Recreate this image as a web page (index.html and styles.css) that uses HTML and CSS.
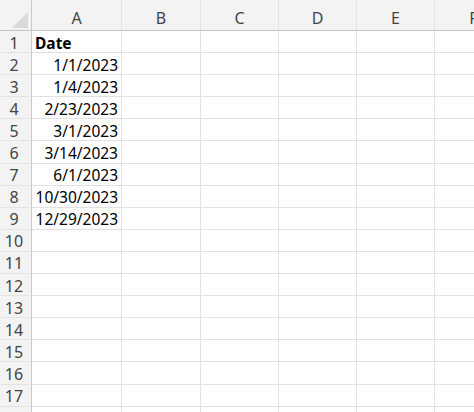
FILE: index.html
```html
<!DOCTYPE html>
<html>
<head>
<meta charset="utf-8">
<link rel="stylesheet" href="styles.css">
</head>
<body>
<div class="sheet">
  <div class="corner"><span class="tri"></span></div>
  <div class="colhead">A</div><div class="colhead">B</div><div class="colhead">C</div><div class="colhead">D</div><div class="colhead">E</div><div class="colhead">F</div>

  <div class="rowhead">1</div><div class="cell bold">Date</div><div class="cell"></div><div class="cell"></div><div class="cell"></div><div class="cell"></div><div class="cell"></div>
  <div class="rowhead">2</div><div class="cell num">1/1/2023</div><div class="cell"></div><div class="cell"></div><div class="cell"></div><div class="cell"></div><div class="cell"></div>
  <div class="rowhead">3</div><div class="cell num">1/4/2023</div><div class="cell"></div><div class="cell"></div><div class="cell"></div><div class="cell"></div><div class="cell"></div>
  <div class="rowhead">4</div><div class="cell num">2/23/2023</div><div class="cell"></div><div class="cell"></div><div class="cell"></div><div class="cell"></div><div class="cell"></div>
  <div class="rowhead">5</div><div class="cell num">3/1/2023</div><div class="cell"></div><div class="cell"></div><div class="cell"></div><div class="cell"></div><div class="cell"></div>
  <div class="rowhead">6</div><div class="cell num">3/14/2023</div><div class="cell"></div><div class="cell"></div><div class="cell"></div><div class="cell"></div><div class="cell"></div>
  <div class="rowhead">7</div><div class="cell num">6/1/2023</div><div class="cell"></div><div class="cell"></div><div class="cell"></div><div class="cell"></div><div class="cell"></div>
  <div class="rowhead">8</div><div class="cell num">10/30/2023</div><div class="cell"></div><div class="cell"></div><div class="cell"></div><div class="cell"></div><div class="cell"></div>
  <div class="rowhead">9</div><div class="cell num">12/29/2023</div><div class="cell"></div><div class="cell"></div><div class="cell"></div><div class="cell"></div><div class="cell"></div>
  <div class="rowhead">10</div><div class="cell"></div><div class="cell"></div><div class="cell"></div><div class="cell"></div><div class="cell"></div><div class="cell"></div>
  <div class="rowhead">11</div><div class="cell"></div><div class="cell"></div><div class="cell"></div><div class="cell"></div><div class="cell"></div><div class="cell"></div>
  <div class="rowhead">12</div><div class="cell"></div><div class="cell"></div><div class="cell"></div><div class="cell"></div><div class="cell"></div><div class="cell"></div>
  <div class="rowhead">13</div><div class="cell"></div><div class="cell"></div><div class="cell"></div><div class="cell"></div><div class="cell"></div><div class="cell"></div>
  <div class="rowhead">14</div><div class="cell"></div><div class="cell"></div><div class="cell"></div><div class="cell"></div><div class="cell"></div><div class="cell"></div>
  <div class="rowhead">15</div><div class="cell"></div><div class="cell"></div><div class="cell"></div><div class="cell"></div><div class="cell"></div><div class="cell"></div>
  <div class="rowhead">16</div><div class="cell"></div><div class="cell"></div><div class="cell"></div><div class="cell"></div><div class="cell"></div><div class="cell"></div>
  <div class="rowhead">17</div><div class="cell"></div><div class="cell"></div><div class="cell"></div><div class="cell"></div><div class="cell"></div><div class="cell"></div>
  <div class="rowhead"></div><div class="cell"></div><div class="cell"></div><div class="cell"></div><div class="cell"></div><div class="cell"></div><div class="cell"></div>
</div>
</body>
</html>
```
FILE: styles.css
```css
html, body {
  margin: 0;
  padding: 0;
  background: #ffffff;
  overflow: hidden;
}
.sheet {
  display: grid;
  grid-template-columns: 32px 90px 79px 78px 78px 78px 78px;
  grid-template-rows: 31px repeat(18, 22.1px);
  width: 474px;
  height: 412px;
  overflow: hidden;
  font-family: "Noto Sans", "Open Sans", sans-serif;
}
.corner {
  background: #f3f3f3;
  border-right: 1px solid #c9c9c9;
  border-bottom: 1px solid #c4c4c4;
  box-sizing: border-box;
  position: relative;
}
.tri {
  position: absolute;
  right: 3px;
  bottom: 2px;
  width: 0;
  height: 0;
  border-left: 16px solid transparent;
  border-bottom: 16px solid #dadada;
}
.colhead {
  background: #f3f3f3;
  border-right: 1px solid #e2e2e2;
  border-bottom: 1px solid #c4c4c4;
  box-sizing: border-box;
  color: #444444;
  font-size: 16px;
  display: flex;
  align-items: flex-end;
  justify-content: center;
  padding-bottom: 3px;
  line-height: 18px;
}
.rowhead {
  background: #f3f3f3;
  border-right: 1px solid #c9c9c9;
  border-bottom: 1px solid #e3e3e3;
  box-sizing: border-box;
  color: #444444;
  font-size: 16px;
  display: flex;
  align-items: center;
  justify-content: center;
  padding: 2px 3px 0 0;
  line-height: 18px;
}
.cell {
  border-right: 1px solid #e1e1e1;
  border-bottom: 1px solid #e1e1e1;
  box-sizing: border-box;
  font-size: 15.5px;
  color: #000000;
  display: flex;
  align-items: center;
  padding: 2px 3px 0 3px;
  line-height: 18px;
  white-space: nowrap;
}
.bold {
  font-weight: 700;
}
.num {
  justify-content: flex-end;
}
```
